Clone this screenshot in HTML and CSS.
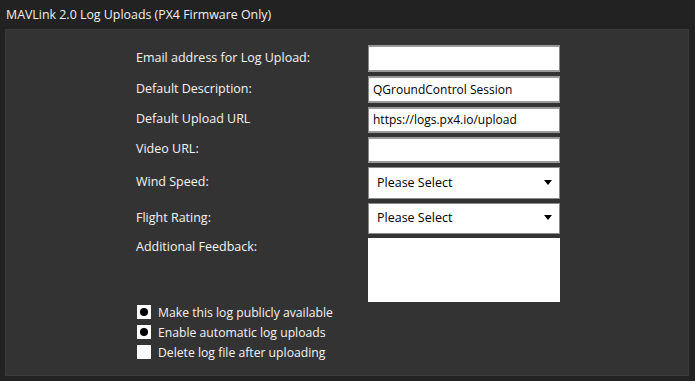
FILE: index.html
```html
<!DOCTYPE html>
<html>
<head>
<meta charset="utf-8">
<link rel="stylesheet" href="styles.css">
</head>
<body>
<div class="page">
  <div class="title">MAVLink 2.0 Log Uploads (PX4 Firmware Only)</div>
  <div class="panel">
    <div class="form">
      <div class="label">Email address for Log Upload:</div>
      <div class="field text"></div>
      <div class="label">Default Description:</div>
      <div class="field text">QGroundControl Session</div>
      <div class="label">Default Upload URL</div>
      <div class="field text">https://logs.px4.io/upload</div>
      <div class="label">Video URL:</div>
      <div class="field text"></div>
      <div class="label">Wind Speed:</div>
      <div class="field combo"><span>Please Select</span><span class="arrow"></span></div>
      <div class="label">Flight Rating:</div>
      <div class="field combo"><span>Please Select</span><span class="arrow"></span></div>
      <div class="label top">Additional Feedback:</div>
      <div class="field area"></div>
    </div>
    <div class="checks">
      <div class="check"><span class="box on"></span>Make this log publicly available</div>
      <div class="check"><span class="box on"></span>Enable automatic log uploads</div>
      <div class="check"><span class="box"></span>Delete log file after uploading</div>
    </div>
  </div>
</div>
</body>
</html>
```

FILE: styles.css
```css
html, body {
  margin: 0;
  padding: 0;
  background: #222222;
}
.page {
  width: 695px;
  height: 381px;
  font-family: "Open Sans", "DejaVu Sans", sans-serif;
  color: #ffffff;
  box-sizing: border-box;
  padding: 0 6px 0 5px;
}
.title {
  height: 29px;
  line-height: 29px;
  font-size: 12.4px;
  padding-left: 1px;
  color: #f0f0f0;
}
.panel {
  background: #333333;
  border: 1px solid #3a3a3a;
  height: 347px;
  box-sizing: border-box;
  padding: 15px 0 0 130px;
}
.form {
  display: grid;
  grid-template-columns: 232px 192px;
  grid-template-rows: 27px 27px 26px 26px 32px 31px 64px;
  row-gap: 4px;
  font-size: 12.5px;
}
.label {
  display: flex;
  align-items: center;
  color: #f4f4f4;
  padding-bottom: 3px;
}
.label.top {
  align-items: flex-start;
  padding-top: 0;
}
.field {
  background: #ffffff;
  color: #000000;
  box-sizing: border-box;
  display: flex;
  align-items: center;
}
.text {
  border-top: 2px solid #9a9a9a;
  border-bottom: 2px solid #9a9a9a;
  border-left: 1px solid #8a8a8a;
  border-right: 1px solid #8a8a8a;
  padding-left: 4px;
  padding-bottom: 1px;
  font-size: 12px;
}
.combo {
  border: 1px solid #8a8a8a;
  padding: 0 7px 2px 8px;
  justify-content: space-between;
}
.arrow {
  width: 0;
  height: 0;
  border-left: 4px solid transparent;
  border-right: 4px solid transparent;
  border-top: 5px solid #000000;
}
.area {
  border: none;
}
.checks {
  display: flex;
  flex-direction: column;
  font-size: 12.2px;
  margin-left: 1px;
}
.check {
  height: 20px;
  display: flex;
  align-items: center;
  color: #f4f4f4;
}
.box {
  width: 14px;
  height: 14px;
  background: #ffffff;
  box-sizing: border-box;
  margin-right: 7px;
  display: flex;
  align-items: center;
  justify-content: center;
}
.box.on::after {
  content: "";
  width: 8px;
  height: 8px;
  border-radius: 50%;
  background: #000000;
}
```
